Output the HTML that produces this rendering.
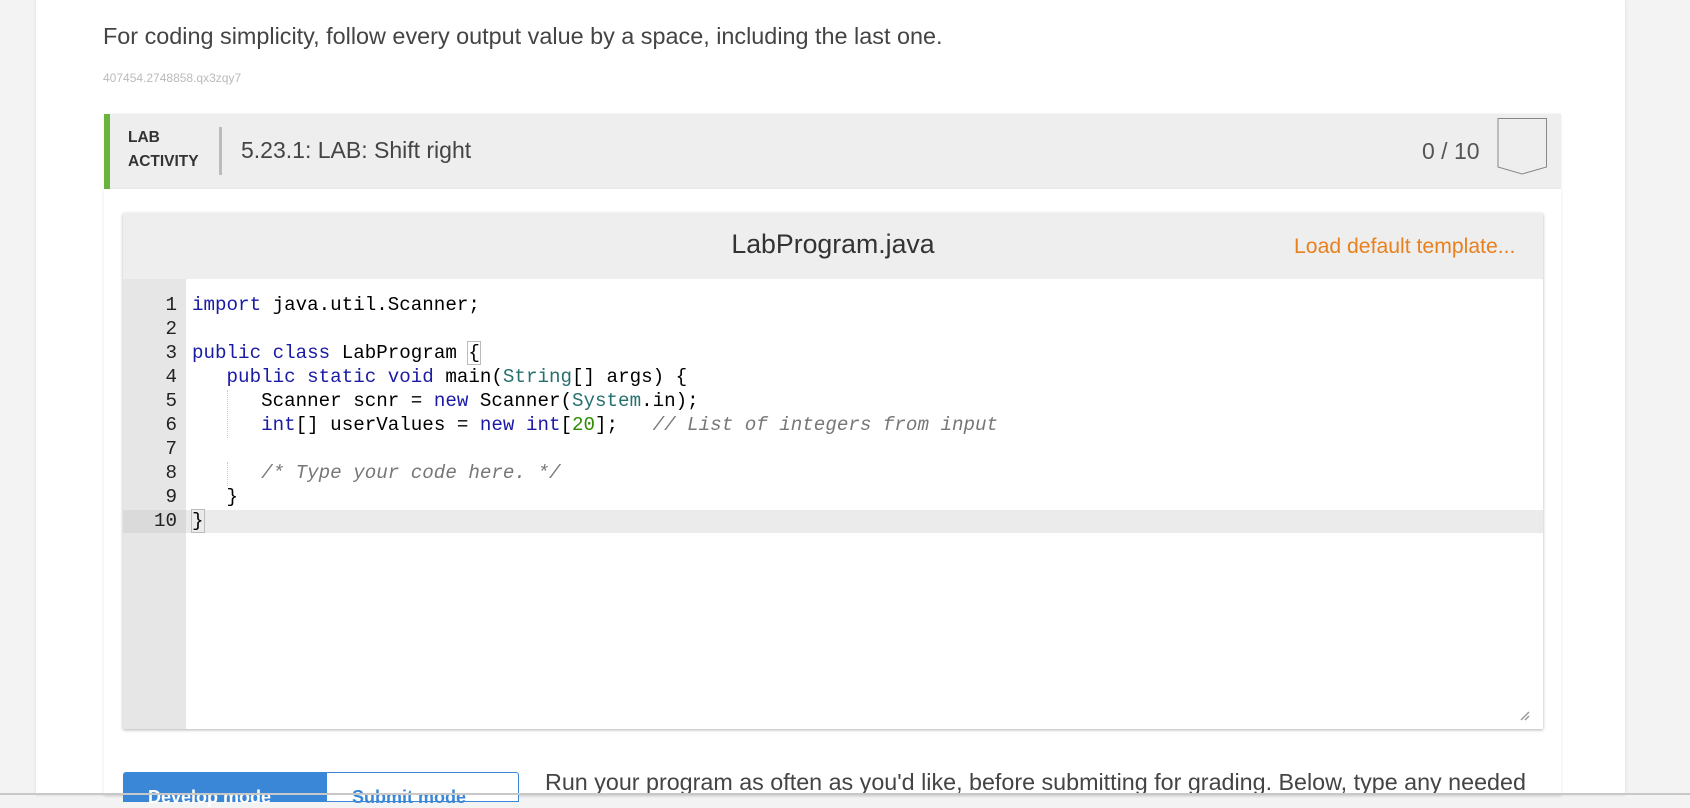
<!DOCTYPE html>
<html><head><meta charset="utf-8"><style>
*{margin:0;padding:0;box-sizing:border-box}
body{width:1690px;height:795px;overflow:hidden;background:#f3f3f3;font-family:"Liberation Sans",sans-serif;position:relative}
.panel{position:absolute;left:36px;top:0;width:1589px;height:795px;background:#fff;box-shadow:0 0 3px rgba(0,0,0,.12)}
.abs{position:absolute;white-space:nowrap}
.code{font-family:"Liberation Mono","DejaVu Sans Mono",monospace;font-size:19.2px;color:#000}
.code div{white-space:pre}
.ln{position:absolute;left:123px;width:54px;text-align:right;color:#222}
.cl{position:absolute;left:192px}
.k{color:#1a1aa6}.t{color:#267070}.n{color:#2e8b00}.c{color:#777;font-style:italic}
.guide{position:absolute;border-left:1px dotted #ccc}
</style></head><body>
<div class="panel"></div>
<div class="abs" style="left:103px;top:23px;font-size:23.4px;color:#444">For coding simplicity, follow every output value by a space, including the last one.</div>
<div class="abs" style="left:103px;top:71px;font-size:12px;color:#bbb">407454.2748858.qx3zqy7</div>

<div class="abs" style="left:104px;top:114px;width:1457px;height:75px;background:#eee;box-shadow:0 0 2px rgba(0,0,0,.1)"></div>
<div class="abs" style="left:104px;top:114px;width:6px;height:75px;background:#6ab43e"></div>
<div class="abs" style="left:104px;top:189px;width:1457px;height:606px;background:#fff;box-shadow:0 1px 3px rgba(0,0,0,.12)"></div>
<div class="abs" style="left:128px;top:126px;font-size:15.5px;font-weight:bold;color:#333;line-height:24px">LAB<br>ACTIVITY</div>
<div class="abs" style="left:219px;top:127px;width:3px;height:48px;background:#bbb"></div>
<div class="abs" style="left:241px;top:137px;font-size:23px;color:#444">5.23.1: LAB: Shift right</div>
<div class="abs" style="left:1422px;top:138px;font-size:23px;color:#555">0 / 10</div>
<svg class="abs" style="left:1497px;top:118px" width="51" height="60"><path d="M1 0.5H49.5V49L25 56L1 49Z" fill="none" stroke="#888" stroke-width="1"/></svg>

<div class="abs" style="left:123px;top:213px;width:1420px;height:516px;background:#fff;box-shadow:0 1px 3px rgba(0,0,0,.3)"></div>
<div class="abs" style="left:123px;top:213px;width:1420px;height:66px;background:#eee"></div>
<div class="abs" style="left:123px;top:229px;width:1420px;text-align:center;font-size:26.7px;color:#333">LabProgram.java</div>
<div class="abs" style="left:1294px;top:235px;font-size:21.2px;color:#e8801e">Load default template...</div>
<div class="abs" style="left:123px;top:279px;width:63px;height:450px;background:#e6e6e6"></div>
<div class="abs" style="left:123px;top:510px;width:1420px;height:23px;background:#ebebeb"></div>
<div class="abs" style="left:123px;top:510px;width:63px;height:23px;background:#dadada"></div>
<div class="guide" style="left:227px;top:390px;height:48px"></div>
<div class="guide" style="left:227px;top:462px;height:24px"></div>

<div class="code">
<div class="ln" style="top:294px">1</div><div class="cl" style="top:294px"><span class="k">import</span> java.util.Scanner;</div>
<div class="ln" style="top:318px">2</div>
<div class="ln" style="top:342px">3</div><div class="cl" style="top:342px"><span class="k">public</span> <span class="k">class</span> LabProgram <span style="outline:1px solid #bbb">{</span></div>
<div class="ln" style="top:366px">4</div><div class="cl" style="top:366px">   <span class="k">public</span> <span class="k">static</span> <span class="k">void</span> main(<span class="t">String</span>[] args) {</div>
<div class="ln" style="top:390px">5</div><div class="cl" style="top:390px">      Scanner scnr = <span class="k">new</span> Scanner(<span class="t">System</span>.in);</div>
<div class="ln" style="top:414px">6</div><div class="cl" style="top:414px">      <span class="k">int</span>[] userValues = <span class="k">new</span> <span class="k">int</span>[<span class="n">20</span>];   <span class="c">// List of integers from input</span></div>
<div class="ln" style="top:438px">7</div>
<div class="ln" style="top:462px">8</div><div class="cl" style="top:462px">      <span class="c">/* Type your code here. */</span></div>
<div class="ln" style="top:486px">9</div><div class="cl" style="top:486px">   }</div>
<div class="ln" style="top:510px">10</div><div class="cl" style="top:510px"><span style="outline:1px solid #bbb">}</span></div>
</div>
<svg class="abs" style="left:1520px;top:711px" width="10" height="10"><path d="M9 1L1 9M9 5L5 9" stroke="#999" stroke-width="1.5"/></svg>

<div class="abs" style="left:123px;top:772px;width:203px;height:30px;background:#3a87d8;border-radius:3px 0 0 0"></div>
<div class="abs" style="left:326px;top:772px;width:193px;height:30px;background:#fff;border:1px solid #3a87d8;border-radius:0 3px 0 0"></div>
<div class="abs" style="left:148px;top:787px;font-size:18px;color:#fff;font-weight:bold">Develop mode</div>
<div class="abs" style="left:352px;top:787px;font-size:18px;color:#3a87d8;font-weight:bold">Submit mode</div>
<div class="abs" style="left:545px;top:769px;font-size:23.3px;color:#444">Run your program as often as you'd like, before submitting for grading. Below, type any needed</div>
<div class="abs" style="left:0;top:793px;width:1690px;height:2px;background:#c8c8c8"></div>
</body></html>
